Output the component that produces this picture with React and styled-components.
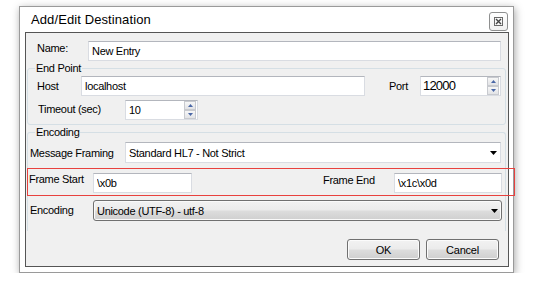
import styled, { createGlobalStyle } from "styled-components";

const GlobalStyle = createGlobalStyle`
  body {
    margin: 0;
    background: #ffffff;
    font-family: "Liberation Sans", Arial, sans-serif;
  }
`

const Page = styled.div`
  padding: 6px 0 0 19px;
`

const Window = styled.div`
  width: 495px;
  box-sizing: border-box;
  background: #ffffff;
  border: 1px solid #9a9a9a;
  padding: 0 4px 5px 5px;
  box-shadow: 1px 2px 8px rgba(0, 0, 0, 0.35);
`

const TitleBar = styled.div`
  display: flex;
  justify-content: space-between;
  align-items: flex-start;
  height: 25px;
  box-sizing: border-box;
  padding: 5px 1px 0 6px;
`

const Title = styled.div`
  font-size: 13px;
  line-height: 15px;
  letter-spacing: 0.1px;
  color: #000000;
`

const CloseButton = styled.button`
  width: 19px;
  height: 19px;
  box-sizing: border-box;
  padding: 0;
  border: 1px solid #8e8f8f;
  border-radius: 3px;
  background: linear-gradient(#ffffff, #f1f1f1);
  display: flex;
  align-items: center;
  justify-content: center;
`

const Client = styled.div`
  border: 1px solid #555555;
  background: #f0f0f0;
  padding: 0 2px 6px 1px;
`

const Row = styled.div`
  display: flex;
  align-items: flex-start;
  margin-top: ${(p) => p.$mt || 0}px;
  padding-left: ${(p) => p.$pl || 0}px;
`

const MarkedRow = styled(Row)`
  position: relative;

  &::after {
    content: "";
    position: absolute;
    top: -5px;
    left: -2px;
    right: -10px;
    bottom: -3px;
    border: 1px solid #e8413e;
    pointer-events: none;
  }
`

const Label = styled.div`
  width: ${(p) => p.$w}px;
  margin-top: ${(p) => p.$mt || 0}px;
  margin-left: ${(p) => p.$ml || 0}px;
  flex-shrink: 0;
  font-size: 11px;
  line-height: 13px;
  letter-spacing: -0.3px;
  color: #000000;
  white-space: nowrap;
`

const Group = styled.fieldset`
  margin: 0;
  min-width: 0;
  border: 1px solid #d5dfe5;
  border-radius: 3px;
  padding: ${(p) => p.$pt}px 0 ${(p) => p.$pb}px 1px;
  ${(p) => p.$open && "border-bottom: none; border-bottom-left-radius: 0; border-bottom-right-radius: 0;"}
`

const Legend = styled.legend`
  margin-left: 6px;
  padding: 0 1px;
  font-size: 11px;
  line-height: 14px;
  letter-spacing: -0.3px;
  color: #000000;
`

const TextBox = styled.input`
  width: ${(p) => p.$w}px;
  height: 20px;
  box-sizing: border-box;
  margin: 0;
  padding: 0 3px;
  border: 1px solid #d9dce2;
  border-top-color: #b3b6bd;
  background: #ffffff;
  font-family: "Liberation Sans", Arial, sans-serif;
  font-size: 11px;
  letter-spacing: -0.3px;
  color: #000000;
  outline: none;
`

const NumberBox = styled.div`
  width: ${(p) => p.$w}px;
  height: 20px;
  box-sizing: border-box;
  display: flex;
  border: 1px solid #d9dce2;
  border-top-color: #b3b6bd;
  background: #ffffff;
`

const NumberText = styled.div`
  flex: 1;
  padding-left: ${(p) => p.$big ? 2 : 3}px;
  font-size: ${(p) => p.$big ? 13 : 11}px;
  letter-spacing: ${(p) => p.$big ? -0.8 : -0.3}px;
  line-height: 18px;
  color: #000000;
`

const Spinner = styled.div`
  width: 12px;
  margin-right: 1px;
  display: flex;
  flex-direction: column;
`

const SpinButton = styled.div`
  height: 9px;
  box-sizing: border-box;
  border: 1px solid #c8cacf;
  background: linear-gradient(#f7f7f7, #e2e3e6);
  display: flex;
  align-items: center;
  justify-content: center;
`

const Combo = styled.div`
  width: ${(p) => p.$w}px;
  height: 21px;
  box-sizing: border-box;
  display: flex;
  align-items: center;
  justify-content: space-between;
  padding: 0 3px 0 3px;
  font-size: 11px;
  letter-spacing: -0.3px;
  color: #000000;
  ${(p) =>
    p.$button
      ? `
    border: 1px solid #707070;
    border-radius: 3px;
    background: linear-gradient(#f2f2f2 0%, #ebebeb 48%, #dddddd 52%, #cfcfcf 100%);
    box-shadow: inset 0 0 0 1px #fafafa;
  `
      : `
    border: 1px solid #d9dce2;
    border-top-color: #b3b6bd;
    background: #ffffff;
  `}
`

const ButtonRow = styled.div`
  display: flex;
  justify-content: flex-end;
  gap: 6px;
  margin-top: 8px;
  padding-right: 7px;
`

const PushButton = styled.button`
  width: 73px;
  height: 21px;
  box-sizing: border-box;
  margin: 0;
  padding: 0;
  border: 1px solid #707070;
  border-radius: 3px;
  background: linear-gradient(#f2f2f2 0%, #ebebeb 48%, #dddddd 52%, #cfcfcf 100%);
  box-shadow: inset 0 0 0 1px #fbfbfb;
  font-family: "Liberation Sans", Arial, sans-serif;
  font-size: 11px;
  letter-spacing: -0.2px;
  color: #000000;
`

const Arrow = () => (
  <svg width="7" height="4" viewBox="0 0 7 4">
    <path d="M0 0 H7 L3.5 4 Z" fill="#000" />
  </svg>
)

const Spin = () => (
  <Spinner>
    <SpinButton>
      <svg width="5" height="3" viewBox="0 0 5 3">
        <path d="M0 3 L2.5 0 L5 3 Z" fill="#4a67a6" />
      </svg>
    </SpinButton>
    <SpinButton>
      <svg width="5" height="3" viewBox="0 0 5 3">
        <path d="M0 0 H5 L2.5 3 Z" fill="#4a67a6" />
      </svg>
    </SpinButton>
  </Spinner>
)

export default function App() {
  return (
    <Page>
      <GlobalStyle />
      <Window>
        <TitleBar>
          <Title>Add/Edit Destination</Title>
          <CloseButton>
            <svg width="9" height="9" viewBox="0 0 9 9">
              <rect x="0.5" y="0.5" width="8" height="8" fill="none" stroke="#6a6a6a" />
              <path d="M2 2 L7 7 M7 2 L2 7" stroke="#444" strokeWidth="1.4" />
            </svg>
          </CloseButton>
        </TitleBar>
        <Client>
          <Row $mt={8} $pl={10}>
            <Label $w={51} $mt={1}>Name:</Label>
            <TextBox $w={413} defaultValue="New Entry" />
          </Row>

          <Group $pt={1} $pb={4}>
            <Legend>End Point</Legend>
            <Row $pl={8}>
              <Label $w={44} $mt={4}>Host</Label>
              <TextBox $w={284} defaultValue="localhost" />
              <Label $w={31} $mt={4} $ml={24}>Port</Label>
              <NumberBox $w={81}>
                <NumberText $big>12000</NumberText>
                <Spin />
              </NumberBox>
            </Row>
            <Row $mt={4} $pl={9}>
              <Label $w={87} $mt={3}>Timeout (sec)</Label>
              <NumberBox $w={73}>
                <NumberText>10</NumberText>
                <Spin />
              </NumberBox>
            </Row>
          </Group>

          <Group $pt={3} $pb={10} $open>
            <Legend>Encoding</Legend>
            <Row $pl={1}>
              <Label $w={95} $mt={5}>Message Framing</Label>
              <Combo $w={376}>
                <span>Standard HL7 - Not Strict</span>
                <Arrow />
              </Combo>
            </Row>
            <MarkedRow $mt={10}>
              <Label $w={64} $mt={0}>Frame Start</Label>
              <TextBox $w={99} defaultValue="\x0b" />
              <Label $w={71} $mt={1} $ml={131}>Frame End</Label>
              <TextBox $w={108} defaultValue="\x1c\x0d" />
            </MarkedRow>
            <Row $mt={7} $pl={1}>
              <Label $w={63} $mt={4}>Encoding</Label>
              <Combo $w={409} $button>
                <span>Unicode (UTF-8) - utf-8</span>
                <Arrow />
              </Combo>
            </Row>
          </Group>

          <ButtonRow>
            <PushButton>OK</PushButton>
            <PushButton>Cancel</PushButton>
          </ButtonRow>
        </Client>
      </Window>
    </Page>
  )
}
